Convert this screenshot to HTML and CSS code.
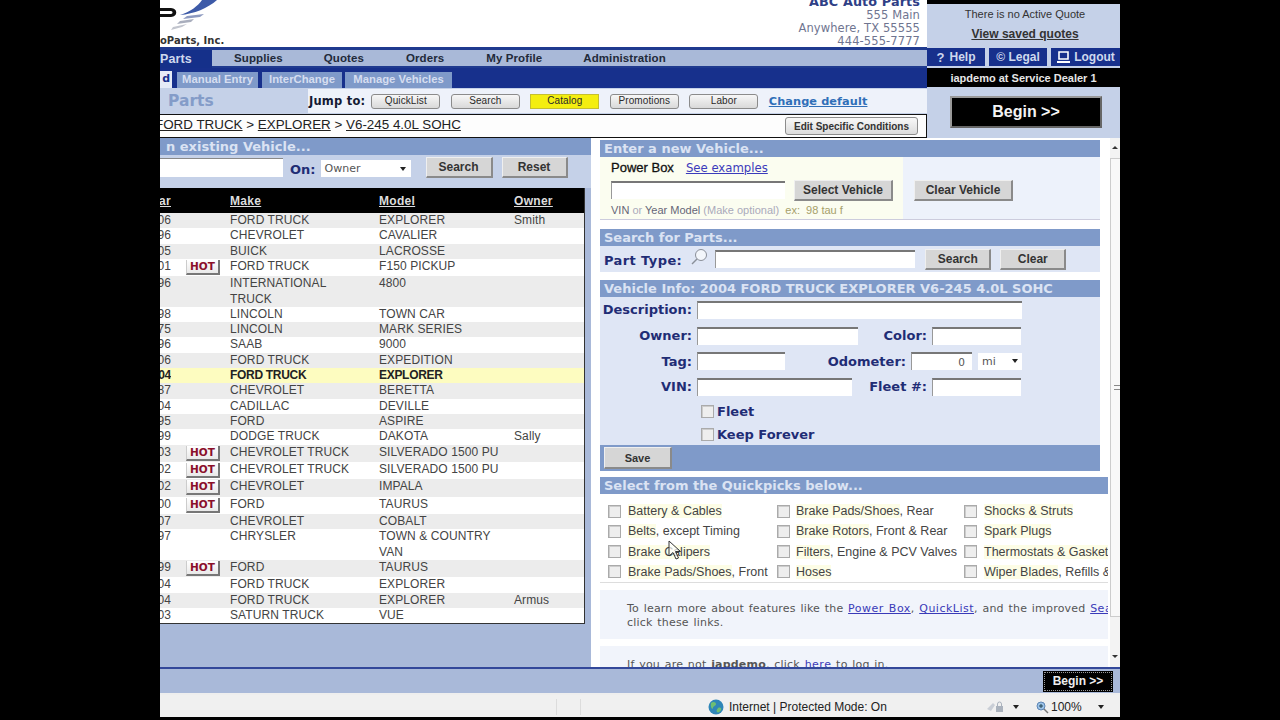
FILE: index.html
```html
<!DOCTYPE html>
<html lang="en">
<head>
<meta charset="utf-8">
<title>Vehicle selection</title>
<link rel="stylesheet" href="styles.css">
</head>
<body>
<div class="app">
  <div class="top">
    <div class="top-main">
      <header class="brand">
        <div class="logo">
          <svg width="70" height="46" viewBox="0 0 70 46">
            <path d="M42 0 C38 6 30 12 20 15 C34 14 48 8 57 0 Z" fill="#3d5aa8"/>
            <path d="M27 16 L44 14 L40 17 L23 19 Z" fill="#8d9ac0"/>
            <path d="M20 21 L34 19 L31 22 L17 24 Z" fill="#a9aebd"/>
            <path d="M13 27 L27 24 L22 27 L11 30 Z" fill="#c2c5ce"/>
            <path d="M0 8 H11 C18 8 18 17 11 17 H0 Z M0 11 V14 H11 C13 14 13 11 11 11 Z" fill="#111" fill-rule="evenodd"/>
          </svg>
          <span class="logo-text">oParts, Inc.</span>
        </div>
        <address class="shop">
          <strong>ABC Auto Parts</strong>
          <span>555 Main</span>
          <span>Anywhere, TX 55555</span>
          <span>444-555-7777</span>
        </address>
      </header>
      <nav class="nav">
        <a class="nav-active">Parts</a>
        <a class="nav-i1">Supplies</a>
        <a class="nav-i2">Quotes</a>
        <a class="nav-i3">Orders</a>
        <a class="nav-i4">My Profile</a>
        <a class="nav-i5">Administration</a>
      </nav>
      <div class="subnav">
        <a class="sub-active">d</a>
        <a class="sub sub-1">Manual Entry</a>
        <a class="sub sub-2">InterChange</a>
        <a class="sub sub-3">Manage Vehicles</a>
      </div>
      <div class="jump">
        <span class="page-name">Parts</span>
        <div class="jump-box">
          <b class="jump-label">Jump to:</b>
          <button class="jb">QuickList</button>
          <button class="jb">Search</button>
          <button class="jb jb-on">Catalog</button>
          <button class="jb">Promotions</button>
          <button class="jb">Labor</button>
          <a class="change">Change default</a>
        </div>
      </div>
      <div class="crumb">
        <div class="crumb-path"><u>FORD TRUCK</u> &gt; <u>EXPLORER</u> &gt; <u>V6-245 4.0L SOHC</u></div>
        <button class="edit">Edit Specific Conditions</button>
      </div>
    </div>
    <aside class="side">
      <div class="quote">
        <span>There is no Active Quote</span>
        <a>View saved quotes</a>
      </div>
      <div class="tools">
        <a class="tool tool-help"><b>?</b> Help</a>
        <a class="tool tool-legal">© Legal</a>
        <a class="tool tool-logout">
          <svg width="15" height="13" viewBox="0 0 15 13"><path d="M3 1h9v7H3z" fill="none" stroke="#fff" stroke-width="1.6"/><path d="M1 10h13v2H1z" fill="#fff"/></svg>
          Logout</a>
      </div>
      <div class="user">iapdemo at Service Dealer 1</div>
      <div class="begin-wrap"><button class="begin">Begin &gt;&gt;</button></div>
    </aside>
  </div>

  <main class="main">
    <section class="left">
      <h2 class="bar bar-left">n existing Vehicle...</h2>
      <div class="filter">
        <div class="filter-input"></div>
        <b class="on">On:</b>
        <div class="select"><span>Owner</span><i class="caret"></i></div>
        <button class="gb gb-search">Search</button>
        <button class="gb gb-reset">Reset</button>
      </div>
      <div class="table">
        <div class="row head"><span class="c-y"><u>ar</u></span><span class="c-h"></span><span class="c-m"><u>Make</u></span><span class="c-o"><u>Model</u></span><span class="c-w"><u>Owner</u></span></div>
        <div class="row g"><span class="c-y">06</span><span class="c-h"></span><span class="c-m">FORD TRUCK</span><span class="c-o">EXPLORER</span><span class="c-w">Smith</span></div>
        <div class="row"><span class="c-y">96</span><span class="c-h"></span><span class="c-m">CHEVROLET</span><span class="c-o">CAVALIER</span><span class="c-w"></span></div>
        <div class="row g"><span class="c-y">05</span><span class="c-h"></span><span class="c-m">BUICK</span><span class="c-o">LACROSSE</span><span class="c-w"></span></div>
        <div class="row hotrow"><span class="c-y">01</span><span class="c-h"><em class="hot">HOT</em></span><span class="c-m">FORD TRUCK</span><span class="c-o">F150 PICKUP</span><span class="c-w"></span></div>
        <div class="row g"><span class="c-y">96</span><span class="c-h"></span><span class="c-m">INTERNATIONAL<br>TRUCK</span><span class="c-o">4800</span><span class="c-w"></span></div>
        <div class="row"><span class="c-y">98</span><span class="c-h"></span><span class="c-m">LINCOLN</span><span class="c-o">TOWN CAR</span><span class="c-w"></span></div>
        <div class="row g"><span class="c-y">75</span><span class="c-h"></span><span class="c-m">LINCOLN</span><span class="c-o">MARK SERIES</span><span class="c-w"></span></div>
        <div class="row"><span class="c-y">96</span><span class="c-h"></span><span class="c-m">SAAB</span><span class="c-o">9000</span><span class="c-w"></span></div>
        <div class="row g"><span class="c-y">06</span><span class="c-h"></span><span class="c-m">FORD TRUCK</span><span class="c-o">EXPEDITION</span><span class="c-w"></span></div>
        <div class="row sel"><span class="c-y">04</span><span class="c-h"></span><span class="c-m">FORD TRUCK</span><span class="c-o">EXPLORER</span><span class="c-w"></span></div>
        <div class="row g"><span class="c-y">87</span><span class="c-h"></span><span class="c-m">CHEVROLET</span><span class="c-o">BERETTA</span><span class="c-w"></span></div>
        <div class="row"><span class="c-y">04</span><span class="c-h"></span><span class="c-m">CADILLAC</span><span class="c-o">DEVILLE</span><span class="c-w"></span></div>
        <div class="row g"><span class="c-y">95</span><span class="c-h"></span><span class="c-m">FORD</span><span class="c-o">ASPIRE</span><span class="c-w"></span></div>
        <div class="row"><span class="c-y">99</span><span class="c-h"></span><span class="c-m">DODGE TRUCK</span><span class="c-o">DAKOTA</span><span class="c-w">Sally</span></div>
        <div class="row g hotrow"><span class="c-y">03</span><span class="c-h"><em class="hot">HOT</em></span><span class="c-m">CHEVROLET TRUCK</span><span class="c-o">SILVERADO 1500 PU</span><span class="c-w"></span></div>
        <div class="row hotrow"><span class="c-y">02</span><span class="c-h"><em class="hot">HOT</em></span><span class="c-m">CHEVROLET TRUCK</span><span class="c-o">SILVERADO 1500 PU</span><span class="c-w"></span></div>
        <div class="row g hotrow"><span class="c-y">02</span><span class="c-h"><em class="hot">HOT</em></span><span class="c-m">CHEVROLET</span><span class="c-o">IMPALA</span><span class="c-w"></span></div>
        <div class="row hotrow"><span class="c-y">00</span><span class="c-h"><em class="hot">HOT</em></span><span class="c-m">FORD</span><span class="c-o">TAURUS</span><span class="c-w"></span></div>
        <div class="row g"><span class="c-y">07</span><span class="c-h"></span><span class="c-m">CHEVROLET</span><span class="c-o">COBALT</span><span class="c-w"></span></div>
        <div class="row"><span class="c-y">97</span><span class="c-h"></span><span class="c-m">CHRYSLER</span><span class="c-o">TOWN &amp; COUNTRY<br>VAN</span><span class="c-w"></span></div>
        <div class="row g hotrow"><span class="c-y">99</span><span class="c-h"><em class="hot">HOT</em></span><span class="c-m">FORD</span><span class="c-o">TAURUS</span><span class="c-w"></span></div>
        <div class="row"><span class="c-y">04</span><span class="c-h"></span><span class="c-m">FORD TRUCK</span><span class="c-o">EXPLORER</span><span class="c-w"></span></div>
        <div class="row g"><span class="c-y">04</span><span class="c-h"></span><span class="c-m">FORD TRUCK</span><span class="c-o">EXPLORER</span><span class="c-w">Armus</span></div>
        <div class="row"><span class="c-y">03</span><span class="c-h"></span><span class="c-m">SATURN TRUCK</span><span class="c-o">VUE</span><span class="c-w"></span></div>
      </div>
    </section>

    <section class="right">
      <div class="right-inner">
        <div class="panel">
          <h2 class="bar">Enter a new Vehicle...</h2>
          <div class="pb">
            <div class="pb-left">
              <div class="pb-title"><b>Power Box</b><a>See examples</a></div>
              <div class="pb-row"><div class="inp inp-pb"></div><button class="gb gb-select">Select Vehicle</button></div>
              <div class="pb-hint"><span class="h1">VIN</span> <span class="h2">or</span> <span class="h3">Year Model</span> <span class="h2">(Make optional)</span> &nbsp;<span class="h4">ex:&nbsp; 98 tau f</span></div>
            </div>
            <div class="pb-right"><button class="gb gb-clearv">Clear Vehicle</button></div>
          </div>
        </div>
        <div class="panel panel-parts">
          <h2 class="bar">Search for Parts...</h2>
          <div class="parts">
            <b class="lbl lbl-part">Part Type:</b>
            <svg class="lens" width="18" height="18" viewBox="0 0 18 18"><circle cx="11" cy="7" r="5.5" fill="#f3f6fb" stroke="#8a8f99"/><path d="M7 11 L2 16" stroke="#8a8f99" stroke-width="1.5"/></svg>
            <div class="inp inp-part"></div>
            <button class="gb gb-psearch">Search</button>
            <button class="gb gb-pclear">Clear</button>
          </div>
        </div>
        <div class="panel panel-info">
          <h2 class="bar">Vehicle Info: 2004 FORD TRUCK EXPLORER V6-245 4.0L SOHC</h2>
          <div class="info">
            <div class="f"><b class="lbl l-main">Description:</b><div class="inp w-desc"></div></div>
            <div class="f"><b class="lbl l-main">Owner:</b><div class="inp w-owner"></div><b class="lbl l-b1">Color:</b><div class="inp w-color"></div></div>
            <div class="f"><b class="lbl l-main">Tag:</b><div class="inp w-tag"></div><b class="lbl l-b2">Odometer:</b><div class="inp w-odo">0</div><div class="select sel-mi"><span>mi</span><i class="caret"></i></div></div>
            <div class="f"><b class="lbl l-main">VIN:</b><div class="inp w-vin"></div><b class="lbl l-b3">Fleet #:</b><div class="inp w-color"></div></div>
            <div class="chk-row"><i class="box"></i><b class="lbl">Fleet</b></div>
            <div class="chk-row"><i class="box"></i><b class="lbl">Keep Forever</b></div>
          </div>
          <div class="save-bar"><button class="gb gb-save">Save</button></div>
        </div>
        <h2 class="bar bar-wide">Select from the Quickpicks below...</h2>
        <div class="picks">
          <div class="pick-col col1">
            <label><i class="box"></i><span><mark>Battery &amp; Cables</mark></span></label>
            <label><i class="box"></i><span><mark>Belts</mark>, except Timing</span></label>
            <label><i class="box"></i><span><mark>Brake Calipers</mark></span></label>
            <label><i class="box"></i><span><mark>Brake Pads/Shoes</mark>, Front</span></label>
          </div>
          <div class="pick-col col2">
            <label><i class="box"></i><span><mark>Brake Pads/Shoes</mark>, Rear</span></label>
            <label><i class="box"></i><span><mark>Brake Rotors</mark>, Front &amp; Rear</span></label>
            <label><i class="box"></i><span><mark>Filters</mark>, Engine &amp; PCV Valves</span></label>
            <label><i class="box"></i><span><mark>Hoses</mark></span></label>
          </div>
          <div class="pick-col col3">
            <label><i class="box"></i><span><mark>Shocks &amp; Struts</mark></span></label>
            <label><i class="box"></i><span><mark>Spark Plugs</mark></span></label>
            <label><i class="box"></i><span><mark>Thermostats &amp; Gaskets</mark></span></label>
            <label><i class="box"></i><span><mark>Wiper Blades</mark>, Refills &amp; Arms</span></label>
          </div>
          <svg class="cursor" width="14" height="20" viewBox="0 0 14 20"><path d="M1 1 V16 L5 12.5 L8 19 L10.5 18 L7.5 11.5 H12.5 Z" fill="#fff" fill-opacity=".7" stroke="#333"/></svg>
        </div>
        <div class="note"><p>To learn more about features like the <a>Power Box</a>, <a>QuickList</a>, and the improved <a>Search</a>,<br>click these links.</p></div>
        <div class="note note-2"><p>If you are not <b>iapdemo</b>, click <a>here</a> to log in.</p></div>
      </div>
      <div class="scroll"><i class="arrow-up"></i><div class="thumb"><span class="grip"></span></div><i class="arrow-down"></i></div>
    </section>
  </main>

  <footer class="footbar"><button class="begin-small">Begin &gt;&gt;</button></footer>
  <div class="status">
    <i class="sep sep-1"></i>
    <i class="sep sep-2"></i>
    <svg class="globe" width="16" height="16" viewBox="0 0 16 16"><circle cx="8" cy="8" r="7.5" fill="#2f86b8"/><path d="M3 4c2-2 5-1 5 1s-3 2-3 4-3 0-2-5zM10 9c2-1 4 0 3 2s-3 3-4 2 0-3 1-4z" fill="#6fbf73"/></svg>
    <span class="zone">Internet | Protected Mode: On</span>
    <svg class="lock" width="22" height="14" viewBox="0 0 22 14"><path d="M1 9 L7 3 L9 5 L5 11 Z" fill="#c9ced6"/><rect x="10" y="6" width="7" height="6" fill="#aab2bd"/><path d="M11.5 6V4a2 2 0 0 1 4 0v2" fill="none" stroke="#aab2bd"/></svg>
    <i class="caret caret-s1"></i>
    <svg class="zoomi" width="13" height="13" viewBox="0 0 13 13"><circle cx="5" cy="5" r="4" fill="#9cc3e8" stroke="#5e86b5"/><path d="M8 8l4 4" stroke="#777" stroke-width="1.5"/><path d="M3 5h4M5 3v4" stroke="#245"/></svg>
    <span class="pct">100%</span>
    <i class="caret caret-s2"></i>
  </div>
</div>
</body>
</html>
```
FILE: styles.css
```css
* { box-sizing: border-box; }
html, body { margin: 0; padding: 0; background: #000; height: 100%; overflow: hidden; }
body { font-family: "Liberation Sans", Arial, sans-serif; font-size: 12px; color: #333; }
h2, p, address { margin: 0; font-style: normal; }
button { font-family: inherit; padding: 0; cursor: pointer; }
.app { width: 960px; height: 717px; margin-left: 160px; background: #a9b9d9; display: flex; flex-direction: column; overflow: hidden; }

.top { display: flex; height: 138px; flex: none; }
.top-main { width: 767px; display: flex; flex-direction: column; }
.brand { height: 47px; background: #fff; display: flex; justify-content: space-between; position: relative; }
.logo { width: 70px; height: 47px; position: relative; overflow: hidden; }
.logo svg { display: block; }
.logo-text { position: absolute; left: 0; top: 35px; font: bold 10px "DejaVu Sans", sans-serif; color: #333; white-space: nowrap; }
.shop { display: flex; flex-direction: column; align-items: flex-end; margin-top: -5px; font: 11.5px/13.2px "DejaVu Sans", Verdana, sans-serif; color: #6f7590; padding-right: 7px; letter-spacing: .1px; }
.shop strong { color: #2f3f86; font-size: 12.8px; line-height: 14px; }
.nav { height: 21px; border-top: 3px solid #1f3a8f; border-bottom: 2px solid #1f3a8f; background: #a9b9d8; display: flex; align-items: center; position: relative; }
.nav a { color: #222a3a; font: bold 11.5px "Liberation Sans", sans-serif; letter-spacing: .1px; white-space: nowrap; }
.nav .nav-active { width: 52px; height: 18px; margin-bottom: -2px; background: #15308a; color: #cfd9ee; font-size: 12.5px; line-height: 17px; padding-top: 1px; }
.nav-i1 { margin-left: 22px; }
.nav-i2 { margin-left: 41px; }
.nav-i3 { margin-left: 42px; }
.nav-i4 { margin-left: 42px; }
.nav-i5 { margin-left: 41px; }
.subnav { height: 20px; background: #17308c; display: flex; align-items: flex-end; }
.sub { height: 16px; background: #7f9ac9; color: #d6def0; text-align: center; font: bold 11.3px/15px "Liberation Sans", sans-serif; white-space: nowrap; }
.sub-1 { width: 81px; }
.sub-2 { width: 80px; margin-left: 4px; }
.sub-3 { width: 107px; margin-left: 3px; }
.sub-active { width: 12px; height: 17px; background: #e6ebf7; color: #17308c; font: bold 11px/16px "DejaVu Sans", sans-serif; text-align: right; margin-right: 5px; padding-right: 2px; }
.jump { height: 26px; background: #c5d1e8; display: flex; align-items: center; }
.page-name { width: 148px; padding-left: 8px; font: bold 15.5px "DejaVu Sans", sans-serif; color: #849cc8; }
.jump-box { flex: 1; height: 24px; background: #eef2fa; display: flex; align-items: center; padding-left: 1px; }
.jump-label { font: bold 11.5px "DejaVu Sans", sans-serif; color: #151a33; margin-right: 6px; letter-spacing: .2px; white-space: nowrap; }
.jb { width: 69px; height: 15px; margin-right: 10.5px; background: linear-gradient(#f7f7f7, #d9d9d9); border: 1px solid #8b8b8b; border-radius: 3px; font-size: 10px; line-height: 12px; color: #2a2a2a; letter-spacing: .1px; }
.jb-on { background: #f4ee10; border-color: #c5bf30; border-radius: 0; }
.change { font: bold 11.3px "DejaVu Sans", sans-serif; color: #2f6fb8; text-decoration: underline; white-space: nowrap; letter-spacing: .1px; }
.crumb { height: 24px; background: #fdfdfd; border: 1px solid #111; border-left: 0; display: flex; align-items: center; justify-content: space-between; padding-right: 8px; }
.crumb-path { font-size: 13.4px; color: #222; margin-left: -5px; margin-top: -3px; white-space: nowrap; }
.edit { height: 18px; width: 133px; background: linear-gradient(#f8f8f8, #dcdcdc); border: 1px solid #8c8c8c; border-radius: 3px; font-size: 10px; font-weight: 700; color: #333; white-space: nowrap; }

.side { width: 193px; background: #c5d1e8; display: flex; flex-direction: column; }
.quote { height: 48px; background: #c5d1e8; border-top: 4px solid #000; display: flex; flex-direction: column; align-items: center; gap: 7px; padding-top: 4px; padding-left: 3px; font-size: 11px; color: #333; }
.quote a { font-weight: 700; font-size: 12px; text-decoration: underline; color: #333; }
.tools { height: 18px; display: flex; gap: 4px; margin-bottom: 2px; }
.tool { background: #17308c; color: #cfd9ee; display: flex; align-items: center; justify-content: center; gap: 3px; font: bold 12px "Liberation Sans", sans-serif; white-space: nowrap; }
.tool b { font-size: 13px; margin-right: 2px; }
.tool-help { width: 58px; }
.tool-legal { width: 58px; }
.tool-logout { flex: 1; }
.user { height: 19px; background: #000; color: #e6e6e6; font: bold 11px/20px "Liberation Sans", sans-serif; text-align: center; }
.begin-wrap { flex: 1; display: flex; justify-content: center; padding-top: 9px; padding-left: 5px; }
.begin { width: 152px; height: 32px; background: #000; color: #f4f4f4; border: 2px solid #666; border-top-color: #999; border-left-color: #999; font-size: 16px; font-weight: 700; }

.main { flex: 1; display: flex; min-height: 0; position: relative; }
.left { width: 431px; flex: none; }
.bar { height: 17px; background: #7f9ac9; color: #dbe3f3; font: bold 13px/18px "DejaVu Sans", Verdana, sans-serif; padding-left: 4px; white-space: nowrap; overflow: hidden; }
.bar-left { padding-left: 6px; }
.filter { height: 33px; background: #c5d1e8; display: flex; align-items: flex-start; padding-top: 2px; }
.filter-input { width: 123px; height: 19px; margin-top: 1px; background: #fff; border-top: 1px solid #888; }
.on { margin-left: 7px; margin-top: 5px; font: bold 13px "DejaVu Sans", sans-serif; color: #1f2d75; }
.select { background: #fff; display: flex; justify-content: space-between; align-items: center; font: 11px "DejaVu Sans", sans-serif; color: #555; }
.filter .select { width: 90px; height: 17px; margin-left: 5px; margin-top: 3px; padding: 0 5px 0 4px; }
.caret { display: block; width: 0; height: 0; border: 3.5px solid transparent; border-top: 4px solid #222; border-bottom: 0; }
.gb { background: #d6d6d6; border: 0; border-right: 2px solid #8a8a8a; border-bottom: 2px solid #8a8a8a; border-top: 1px solid #efefef; border-left: 1px solid #efefef; font-weight: 700; font-size: 12px; color: #333; height: 21px; white-space: nowrap; }
.gb-search { width: 67px; margin-left: 15px; }
.gb-reset { width: 66px; margin-left: 9px; }
.table { background: #fff; border: 1px solid #333; border-top: 0; border-left: 0; margin-right: 6px; height: 436px; overflow: hidden; }
.row { display: flex; min-height: 15.3px; line-height: 15.3px; color: #444; font-size: 12px; letter-spacing: .1px; }
.row.g { background: #ececec; }
.row.sel { background: #fdfcc0; font-weight: 700; color: #222; letter-spacing: -.3px; }
.row.head { background: #000; height: 25px; padding-top: 6px; color: #ddd; font-weight: 700; letter-spacing: .3px; }
.row.hotrow { min-height: 17.4px; }
.c-y { width: 11px; overflow: hidden; white-space: nowrap; display: flex; justify-content: flex-end; align-items: flex-start; }
.c-h { width: 59px; padding-left: 15px; }
.c-m { width: 149px; }
.c-o { width: 135px; white-space: nowrap; }
.c-w { flex: 1; }
.hot { display: block; width: 34px; height: 15px; margin-top: 1px; background: linear-gradient(#fff, #e9e9e9); border-right: 2px solid #777; border-bottom: 2px solid #777; border-left: 1px solid #ccc; color: #8a0f2b; font: bold 10.5px/13px "DejaVu Sans", sans-serif; text-align: center; letter-spacing: 0; }

.right { flex: 1; display: flex; padding-left: 9px; background: #fff; height: 529px; overflow: hidden; }
.right-inner { width: 510px; padding-top: 2px; background: #fff; }
.panel { width: 500px; }
.pb { height: 63px; display: flex; background: #edf2fb; border-bottom: 1px solid #ccd; }
.pb-left { width: 303px; background: #fbfdf0; padding: 3px 0 0 11px; }
.pb-title { display: flex; align-items: baseline; gap: 12px; font-size: 13px; color: #111; height: 20px; }
.pb-title b { font-weight: 400; -webkit-text-stroke: .3px #111; }
.pb-title a { color: #3b3bbb; text-decoration: underline; font: 11.7px "DejaVu Sans", sans-serif; }
.pb-row { display: flex; align-items: flex-start; }
.inp { background: #fff; border-top: 2px solid #777; border-left: 1px solid #999; height: 18px; }
.inp-pb { width: 174px; margin-top: 1px; }
.gb-select { width: 99px; margin-left: 9px; height: 21px; }
.pb-hint { margin-top: 3px; font-size: 11px; line-height: 13px; color: #999; white-space: nowrap; }
.h1, .h3 { color: #667; }
.h2 { color: #aab; }
.h4 { color: #a6a06a; font-weight: 400; }
.pb-right { flex: 1; padding: 23px 0 0 11px; }
.gb-clearv { width: 99px; }
.panel-parts { margin-top: 9px; }
.parts { height: 26px; background: #dfe6f5; display: flex; align-items: center; padding-left: 4px; }
.lbl { font: bold 13px "DejaVu Sans", Verdana, sans-serif; color: #1f2d75; white-space: nowrap; }
.lbl-part { letter-spacing: .4px; padding-top: 2px; }
.lens { margin: -5px 0 0 8px; }
.inp-part { width: 200px; margin-left: 7px; }
.gb-psearch { width: 66px; margin-left: 10px; }
.gb-pclear { width: 66px; margin-left: 9px; }
.panel-info { margin-top: 8px; }
.info { height: 148px; background: #dfe6f5; }
.f { display: flex; align-items: center; height: 25.7px; }
.l-main { width: 92px; text-align: right; display: block; }
.w-desc { width: 325px; margin-left: 5px; }
.w-owner { width: 161px; margin-left: 5px; }
.w-color { width: 89px; margin-left: 5px; }
.l-b1 { width: 69px; text-align: right; }
.w-tag { width: 88px; margin-left: 5px; }
.l-b2 { width: 121px; text-align: right; }
.w-odo { width: 61px; margin-left: 5px; padding-right: 7px; text-align: right; font: 10.5px/16px "DejaVu Sans", sans-serif; color: #555; }
.sel-mi { width: 44px; height: 17px; margin-left: 6px; padding: 0 4px; }
.w-vin { width: 155px; margin-left: 5px; }
.l-b3 { width: 75px; text-align: right; }
.chk-row { display: flex; align-items: center; height: 23px; margin-left: 101px; }
.box { display: block; width: 13px; height: 13px; flex: none; background: #eee; border: 1px solid #aaa; box-shadow: inset 1px 1px 0 #ccc; }
.chk-row .box { margin-right: 3px; }
.save-bar { height: 26px; background: #7f9ac9; padding: 2px 0 0 4px; }
.gb-save { width: 68px; height: 22px; font-size: 11px; }
.bar-wide { width: 508px; margin-top: 6px; }
.picks { width: 508px; height: 89px; position: relative; display: flex; padding: 7px 0 0 8px; background: #fff; border-bottom: 1px solid #ddd; overflow: hidden; }
.pick-col { display: flex; flex-direction: column; flex: none; }
.col1 { width: 169px; }
.col2 { width: 187px; }
.col3 { width: 150px; }
.pick-col label { display: flex; align-items: center; gap: 7px; height: 20.4px; white-space: nowrap; font-size: 12.5px; color: #444; }
.col2 label { gap: 6px; }
mark { background: #fdfde6; color: inherit; }
.cursor { position: absolute; left: 68px; top: 46px; }
.note { width: 508px; height: 49px; margin-top: 7px; background: #f1f4fb; padding: 12px 0 0 27px; font: 11px/13.5px "DejaVu Sans", sans-serif; color: #555; white-space: nowrap; overflow: hidden; letter-spacing: .2px; word-spacing: 1px; }
.note a { color: #3a3ab8; text-decoration: underline; letter-spacing: .5px; }
.note-2 { height: 40px; margin-top: 7px; padding-top: 12px; }
.scroll { width: 10px; flex: none; background: #f3f3f3; display: flex; flex-direction: column; align-items: center; }
.arrow-up { margin-top: 8px; width: 0; height: 0; border: 3px solid transparent; border-bottom: 3px solid #333; border-top: 0; }
.thumb { width: 10px; height: 459px; margin-top: 9px; background: #f8f8f8; border: 1px solid #ccc; border-right: 0; position: relative; }
.grip { position: absolute; top: 226px; left: 3px; width: 6px; height: 5px; border-top: 1px solid #888; border-bottom: 1px solid #888; }
.arrow-down { margin-top: 38px; width: 0; height: 0; border: 3px solid transparent; border-top: 3px solid #333; border-bottom: 0; }

.footbar { height: 28px; flex: none; background: #a9b9d9; border-top: 2px solid #33489a; border-bottom: 2px solid #eee; display: flex; justify-content: flex-end; align-items: center; padding-right: 8px; }
.begin-small { width: 68px; height: 19px; background: #000; color: #eee; border: 1px dotted #999; outline: 1px solid #000; font-weight: 700; font-size: 12px; }
.status { height: 22px; flex: none; background: #f0f0f0; display: flex; align-items: center; font-size: 12px; color: #222; padding-left: 396px; padding-top: 2px; }
.sep { display: block; height: 16px; border-left: 1px solid #dcdcdc; }
.sep-1 { width: 24px; }
.sep-2 { width: 128px; }
.zone { margin-left: 5px; width: 257px; }
.caret-s1 { margin-left: 5px; }
.zoomi { margin-left: 17px; }
.pct { margin-left: 2px; font-size: 12px; }
.caret-s2 { margin-left: 16px; }
```
